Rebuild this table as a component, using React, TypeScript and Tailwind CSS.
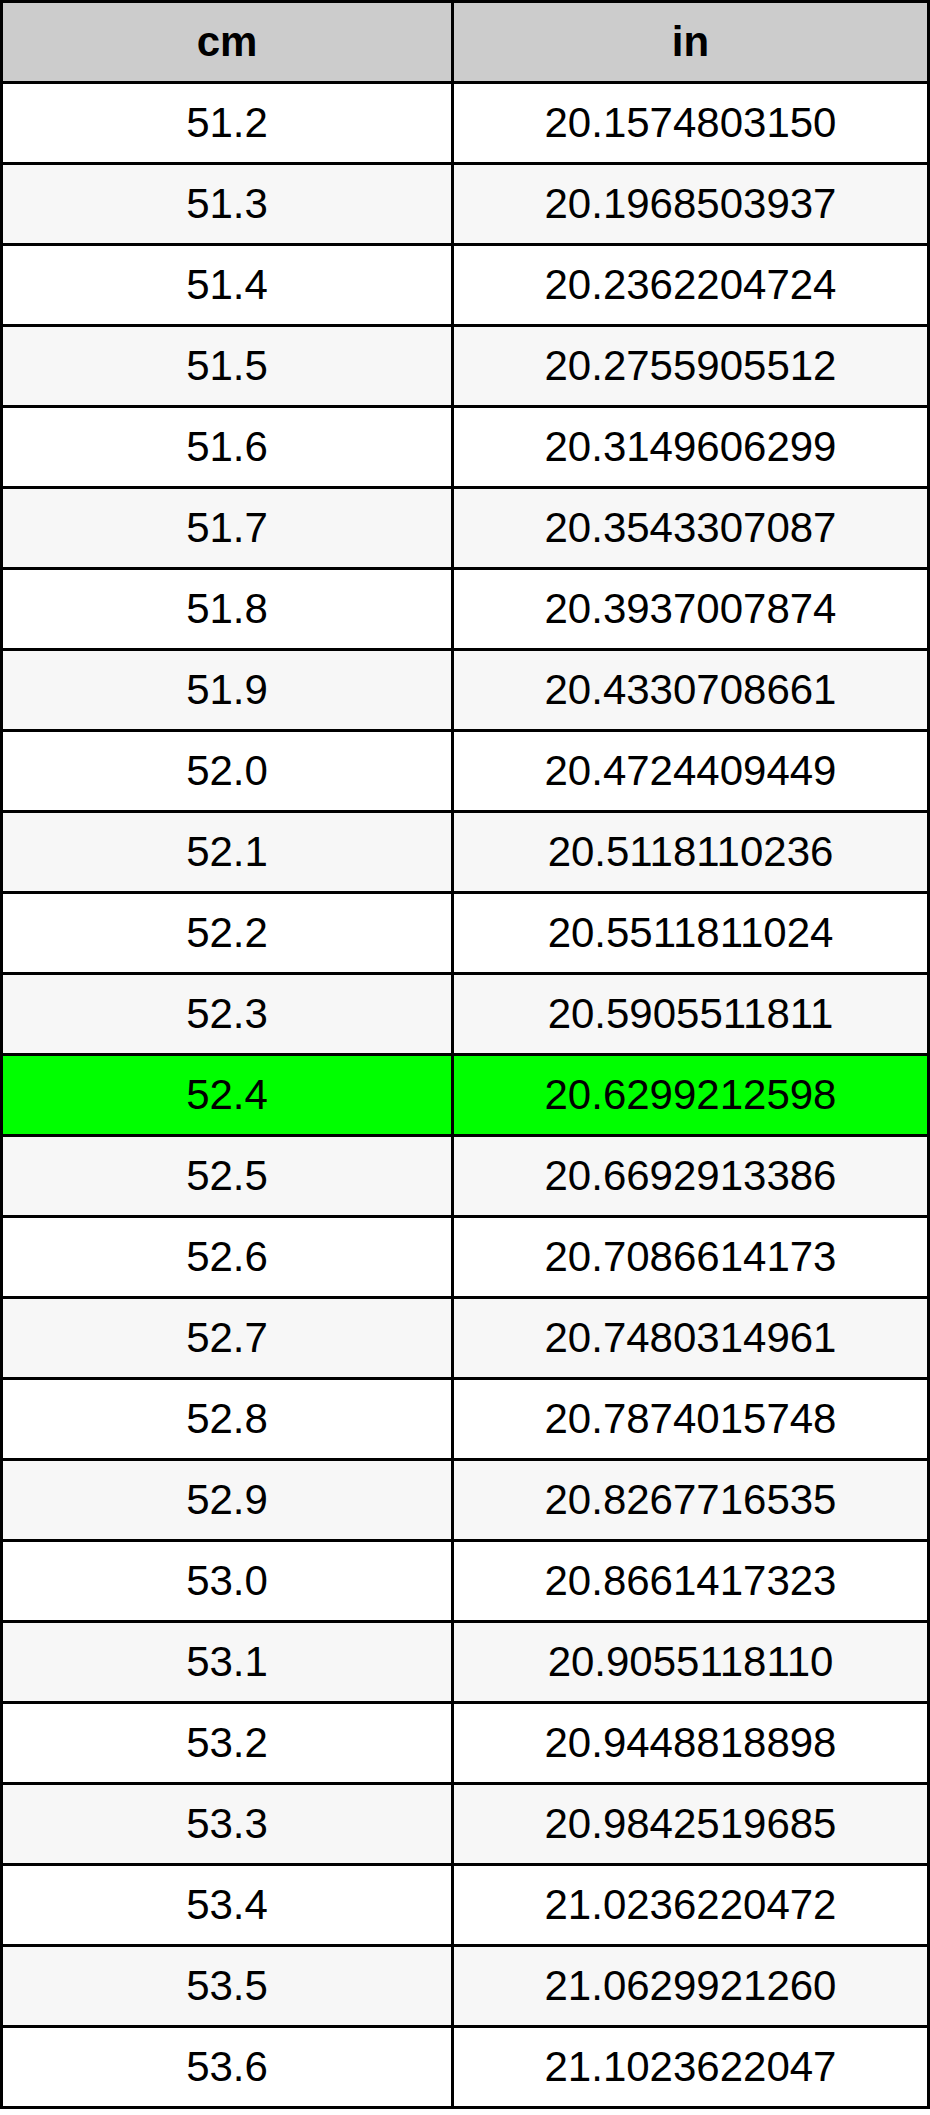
const rows: [string, string][] = [
    ['51.2', '20.1574803150'],
    ['51.3', '20.1968503937'],
    ['51.4', '20.2362204724'],
    ['51.5', '20.2755905512'],
    ['51.6', '20.3149606299'],
    ['51.7', '20.3543307087'],
    ['51.8', '20.3937007874'],
    ['51.9', '20.4330708661'],
    ['52.0', '20.4724409449'],
    ['52.1', '20.5118110236'],
    ['52.2', '20.5511811024'],
    ['52.3', '20.5905511811'],
    ['52.4', '20.6299212598'],
    ['52.5', '20.6692913386'],
    ['52.6', '20.7086614173'],
    ['52.7', '20.7480314961'],
    ['52.8', '20.7874015748'],
    ['52.9', '20.8267716535'],
    ['53.0', '20.8661417323'],
    ['53.1', '20.9055118110'],
    ['53.2', '20.9448818898'],
    ['53.3', '20.9842519685'],
    ['53.4', '21.0236220472'],
    ['53.5', '21.0629921260'],
    ['53.6', '21.1023622047'],
];

const cell = "h-[81px] flex items-center justify-center border-r-[3px] border-b-[3px] border-black";

export default function App() {
    return (
        <div className="w-[930px] bg-white text-black font-['Liberation_Sans',Arial,sans-serif] text-[42px] leading-none">
            <div className="grid grid-cols-[451px_476px] border-l-[3px] border-t-[3px] border-black">
                <div className={`${cell} bg-[#cccccc] font-bold`}>cm</div>
                <div className={`${cell} bg-[#cccccc] font-bold`}>in</div>
                {rows.map(([cm, inch], idx) => {
                    const bg = cm == '52.4' ? 'bg-[#00ff00]' : idx % 2 == 1 ? 'bg-[#f7f7f7]' : 'bg-white';
                    return [
                        <div key={cm + 'a'} className={`${cell} ${bg}`}>{cm}</div>,
                        <div key={cm + 'b'} className={`${cell} ${bg}`}>{inch}</div>,
                    ];
                })}
            </div>
        </div>
    );
}
